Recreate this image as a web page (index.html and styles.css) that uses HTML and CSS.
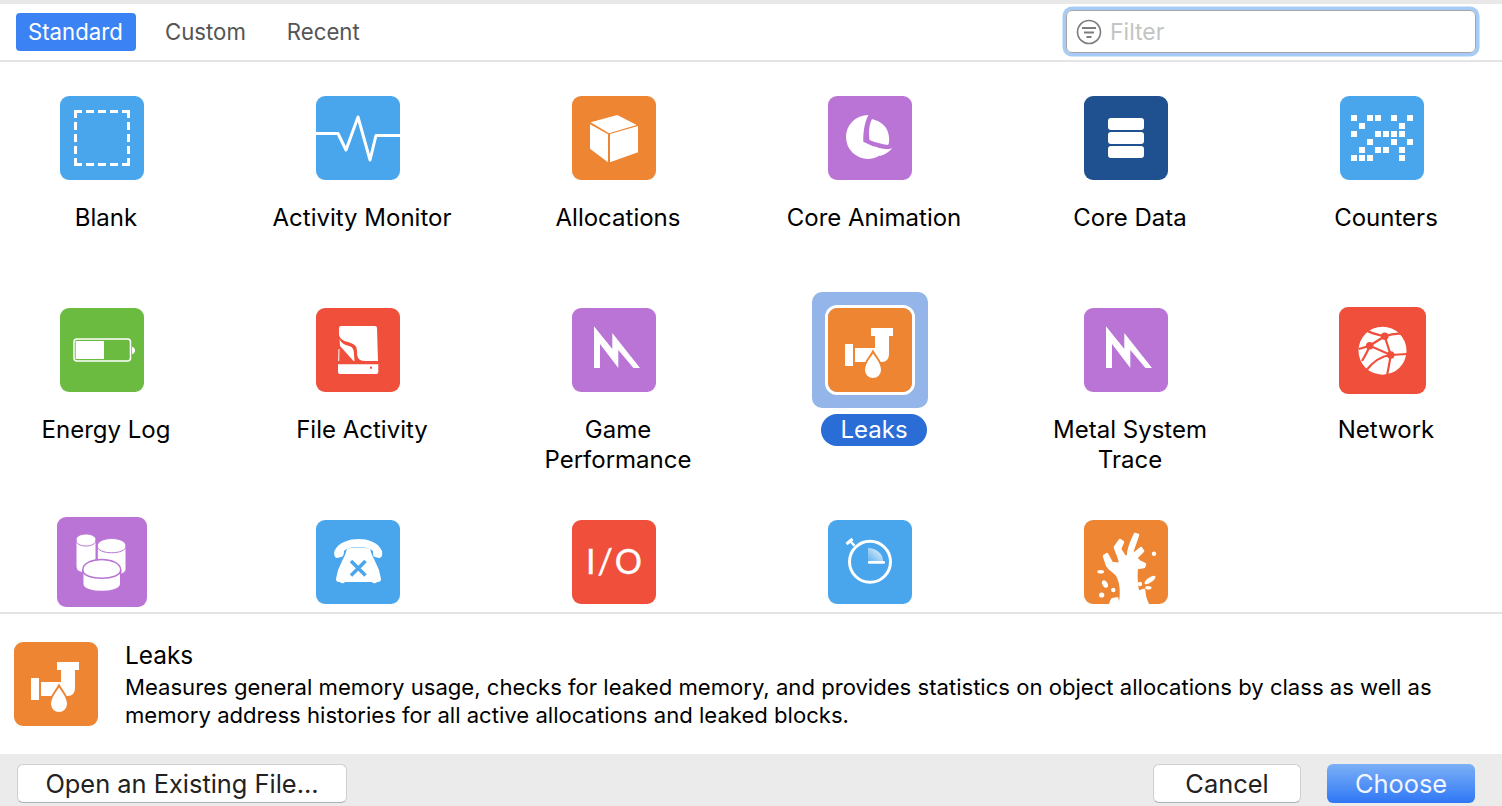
FILE: index.html
```html
<!DOCTYPE html>
<html lang="en">
<head>
  <meta charset="UTF-8">
  <title>Choose a profiling template</title>
  <link rel="stylesheet" href="styles.css">
</head>
<body>

<svg class="defs" aria-hidden="true">
  <symbol id="metal" viewBox="0 0 84 84">
    <path fill="#fff" d="M22 18.300V60h6V36l18.300 24V42l15.200 18H68L40.300 25v16z"/>
  </symbol>
  <symbol id="tap" viewBox="0 0 84 84">
    <path fill="#fff" d="M43 20h22v8H43zM17 36h8v22h-8zM27 40h20V28h14v18c0 5-3 8-7 8H27z"/>
    <path fill="#fff" stroke="#ee8533" stroke-width="2" d="M45 43.500c3 6 9 10.500 9 18.500a9 9 0 0 1-18 0c0-8 6-12.500 9-18.500z"/>
  </symbol>
</svg>

<div class="dialog">

  <div class="toolbar">
    <div class="tabs">
      <span class="tab tab-active">Standard</span>
      <span class="tab">Custom</span>
      <span class="tab">Recent</span>
    </div>
    <div class="filter">
      <svg class="filter-icon" viewBox="0 0 26 26">
        <circle cx="13" cy="13" r="11.500" fill="none" stroke="#7c7c7c" stroke-width="1.600"/>
        <path stroke="#7c7c7c" stroke-width="2" d="M6 9h14M8 13.500h10M10.500 18h5"/>
      </svg>
      <span class="filter-text">Filter</span>
    </div>
  </div>

  <div class="grid">

    <div class="tile">
      <div class="slot">
        <svg class="icon" viewBox="0 0 84 84">
          <rect width="84" height="84" rx="9" fill="#4aa6ec"/>
          <rect x="15.500" y="15.500" width="53" height="53" fill="none" stroke="#fff" stroke-width="3" stroke-dasharray="13 4 8 4 8 4 8 4" stroke-dashoffset="6.500"/>
        </svg>
      </div>
      <div class="label">Blank</div>
    </div>

    <div class="tile">
      <div class="slot">
        <svg class="icon" viewBox="0 0 84 84">
          <rect width="84" height="84" rx="9" fill="#4aa6ec"/>
          <path fill="none" stroke="#fff" stroke-width="3" stroke-linejoin="round" d="M0 37.500h22L30 54l12-33 12 43 6-24.500h24"/>
        </svg>
      </div>
      <div class="label">Activity Monitor</div>
    </div>

    <div class="tile">
      <div class="slot">
        <svg class="icon" viewBox="0 0 84 84">
          <rect width="84" height="84" rx="9" fill="#ee8533"/>
          <path fill="#fff" d="M18.700 26.300 45.300 19l19.400 10L37 37.300zM18 28.300l18 10v28L18 52.700zM38 38l28-8v26.300l-28 10z"/>
        </svg>
      </div>
      <div class="label">Allocations</div>
    </div>

    <div class="tile">
      <div class="slot">
        <svg class="icon" viewBox="0 0 84 84">
          <rect width="84" height="84" rx="9" fill="#b974d6"/>
          <circle cx="40" cy="41" r="22" fill="#fff"/>
          <path fill="#b974d6" d="M42 16c-5 8-7 19-6.700 29.700C44 50 54 55 64.500 52L68 52V16z"/>
          <path fill="#fff" d="M44 23c8 2 15 7 16.500 15 1 5 1 9-.5 11-6-1-13-2.500-18.500-5-1-8-.5-15 2.500-21z"/>
          <path fill="#fff" d="M46 50c6 3 12 4.300 18.300 2.300-3.300 3.700-7.300 6.200-12.300 7.700z"/>
        </svg>
      </div>
      <div class="label">Core Animation</div>
    </div>

    <div class="tile">
      <div class="slot">
        <svg class="icon" viewBox="0 0 84 84">
          <rect width="84" height="84" rx="9" fill="#1f5090"/>
          <rect x="24" y="22" width="36" height="12" rx="3" fill="#fff"/>
          <rect x="24" y="36" width="36" height="12" rx="3" fill="#fff"/>
          <rect x="24" y="50" width="36" height="12" rx="3" fill="#fff"/>
        </svg>
      </div>
      <div class="label">Core Data</div>
    </div>

    <div class="tile">
      <div class="slot">
        <svg class="icon" viewBox="0 0 84 84">
          <rect width="84" height="84" rx="9" fill="#4aa6ec"/>
          <path fill="#fff" d="M11 19h6v6h-6zM27 19h6v6h-6zM35 19h6v6h-6zM51 19h6v6h-6zM67 19h6v6h-6zM19 27h6v6h-6zM59 27h6v6h-6zM11 35h6v6h-6zM35 35h6v6h-6zM43 35h6v6h-6zM51 35h6v6h-6zM59 35h6v6h-6zM27 43h6v6h-6zM51 43h6v6h-6zM67 43h6v6h-6zM19 51h6v6h-6zM35 51h6v6h-6zM43 51h6v6h-6zM59 51h6v6h-6zM11 59h6v6h-6zM19 59h6v6h-6zM27 59h6v6h-6zM59 59h6v6h-6z"/>
        </svg>
      </div>
      <div class="label">Counters</div>
    </div>

    <div class="tile">
      <div class="slot">
        <svg class="icon" viewBox="0 0 84 84">
          <rect width="84" height="84" rx="9" fill="#6cbb41"/>
          <rect x="14" y="31" width="56.500" height="22" rx="3" fill="none" stroke="#fff" stroke-width="1.500"/>
          <rect x="15.700" y="33" width="28.300" height="18" fill="#fff"/>
          <path fill="#fff" d="M72 38.700c2 .5 3 2 3 3.700s-1 3.200-3 3.700z"/>
        </svg>
      </div>
      <div class="label">Energy Log</div>
    </div>

    <div class="tile">
      <div class="slot">
        <svg class="icon" viewBox="0 0 84 84">
          <rect width="84" height="84" rx="9" fill="#ef4f3b"/>
          <path fill="#fff" d="M23 20a2 2 0 0 1 2-2h34a2 2 0 0 1 2 2l1 33H49c-6 0-8-3-8-9 0-7-3-8-9-10-5-1-9-4-9-8z"/>
          <path fill="#fff" d="M23.500 31c2 5 6.500 6 9.500 7 4 1 5 4 5 8l.5 7h-1L24 38z"/>
          <path fill="#fff" d="M22.500 41h1l-.3 12h-1z"/>
          <path fill="#fff" d="M22 56.300h40.300V64a2 2 0 0 1-2 2H24a2 2 0 0 1-2-2z"/>
          <rect x="54" y="58.700" width="2" height="2" fill="#ef4f3b"/>
        </svg>
      </div>
      <div class="label">File Activity</div>
    </div>

    <div class="tile">
      <div class="slot">
        <svg class="icon" viewBox="0 0 84 84">
          <rect width="84" height="84" rx="9" fill="#b974d6"/>
          <use href="#metal"/>
        </svg>
      </div>
      <div class="label">Game Performance</div>
    </div>

    <div class="tile tile-selected">
      <div class="slot">
        <div class="selection">
          <div class="ring">
            <svg class="icon" viewBox="0 0 84 84">
              <rect width="84" height="84" rx="9" fill="#ee8533"/>
              <use href="#tap"/>
            </svg>
          </div>
        </div>
      </div>
      <div class="label">Leaks</div>
    </div>

    <div class="tile">
      <div class="slot">
        <svg class="icon" viewBox="0 0 84 84">
          <rect width="84" height="84" rx="9" fill="#b974d6"/>
          <use href="#metal"/>
        </svg>
      </div>
      <div class="label">Metal System Trace</div>
    </div>

    <div class="tile">
      <div class="slot">
        <svg class="icon icon-87" viewBox="0 0 87 87">
          <rect width="87" height="87" rx="9" fill="#ef4f3b"/>
          <circle cx="43.500" cy="43.700" r="24" fill="#fff"/>
          <g fill="none" stroke="#ef4f3b" stroke-width="2.200">
            <path d="M45.700 29.300 30.700 38.700l21 9.300-6-18.700"/>
            <path d="M45.700 29.300C40 28 33 27 27 23M45.700 29.300C52 27 58 26 65 27M30.700 38.700 20 42M30.700 38.700C29 44 26 49 23 54"/>
            <path d="M51.700 48 68 47M51.700 48c-1 6-2 13-3.500 19.300M51.700 48c-10 1-18 7-25 16"/>
          </g>
          <circle cx="45.700" cy="29.300" r="3.800" fill="#ef4f3b"/>
          <circle cx="30.700" cy="38.700" r="3.800" fill="#ef4f3b"/>
          <circle cx="51.700" cy="48" r="3.800" fill="#ef4f3b"/>
        </svg>
      </div>
      <div class="label">Network</div>
    </div>

    <div class="tile">
      <div class="slot">
        <svg class="icon icon-90" viewBox="0 0 90 90">
          <rect width="90" height="90" rx="9" fill="#b974d6"/>
          <g stroke="#b974d6" stroke-width="1">
            <path fill="#fff" d="M19 23c0-8 20-8 20 0v27c0 8-20 8-20 0z"/>
            <path fill="none" d="M19 23c0 8 20 8 20 0"/>
            <path fill="#fff" d="M40.300 29c0-10 28.700-10 28.700 0v23c0 9-28.700 9-28.700 0z"/>
            <path fill="none" d="M40.300 29c0 9 28.700 9 28.700 0"/>
          </g>
          <path fill="#fff" stroke="#b974d6" stroke-width="1.500" d="M25.700 53c0-14 38-14 38 0v14c0 10-38 10-38 0z"/>
          <path fill="none" stroke="#b974d6" stroke-width="1.500" d="M25.700 53c0 11 38 11 38 0"/>
        </svg>
      </div>
    </div>

    <div class="tile">
      <div class="slot">
        <svg class="icon" viewBox="0 0 84 84">
          <rect width="84" height="84" rx="9" fill="#4aa6ec"/>
          <path fill="#fff" d="M18.500 31C22 22 34 19 42.500 19 52 19 62 22 66 31c1 5-1 7-3 7l-4-1c-2 0-2-3-2-6-4-3-8-4-15-4-6 0-11 1-14 4 0 3-1 6-3 6l-4 1c-2 0-3.500-3-2.500-7z"/>
          <path fill="#fff" d="M31 28.500c7-1.500 16-1.500 23 0 1 4 2 7 4 10.500l5 11 2 9c0 2-1 3-3 3h-1a3 3 0 0 1-5 0H29a3 3 0 0 1-5 0h-1c-2 0-3-1-3-3l2-9 5-11c2-3.500 3-6.500 4-10.500z"/>
          <path stroke="#4aa6ec" stroke-width="3.500" d="m35 41 14.500 14.500M49.500 41 35 55.500"/>
        </svg>
      </div>
    </div>

    <div class="tile">
      <div class="slot">
        <svg class="icon" viewBox="0 0 84 84">
          <rect width="84" height="84" rx="9" fill="#ef4f3b"/>
          <text class="io-text" x="43" y="54" text-anchor="middle">I/O</text>
        </svg>
      </div>
    </div>

    <div class="tile">
      <div class="slot">
        <svg class="icon" viewBox="0 0 84 84">
          <defs>
            <linearGradient id="sweep" x1="1" y1="0" x2="0" y2="1">
              <stop offset="0" stop-color="#fff" stop-opacity=".9"/>
              <stop offset="1" stop-color="#fff" stop-opacity=".15"/>
            </linearGradient>
          </defs>
          <rect width="84" height="84" rx="9" fill="#4aa6ec"/>
          <circle cx="42" cy="41.700" r="20.500" fill="none" stroke="#fff" stroke-width="3"/>
          <path stroke="#fff" stroke-width="2.500" d="m23 22 3.500 3.700"/>
          <path stroke="#fff" stroke-width="3" d="m18.500 24 6-5"/>
          <path fill="url(#sweep)" d="M40 28c8.500 0 15 6 15 13H40z"/>
          <rect x="40" y="41" width="17" height="2.700" rx="1" fill="#fff"/>
        </svg>
      </div>
    </div>

    <div class="tile">
      <div class="slot">
        <svg class="icon" viewBox="0 0 84 84">
          <rect width="84" height="84" rx="9" fill="#ee8533"/>
          <path fill="#fff" stroke="#fff" stroke-width="2.500" stroke-linejoin="round" d="M36 84c2-12 1-22-3-29-5-5-9-7-10-10l-3-9 3-2 5 9 8 1c0-6-4-12-5-17l5-7 3 2-3 7 5 8 3-1c0-8 4-16 7-22l3 1c-2 7-5 13-6 18h3l6-5 2 3-7 7 3 3 6 3-1 3-7 1c-1 6-1 14 1 24l6-2 2 14z"/>
          <ellipse cx="16.700" cy="51.700" rx="3.400" ry="1.800" fill="#fff"/>
          <ellipse cx="21" cy="64" rx="2.600" ry="4" fill="#fff" transform="rotate(-30 21 64)"/>
          <circle cx="17.700" cy="75" r="2.600" fill="#fff"/>
          <circle cx="29.300" cy="70" r="2.200" fill="#fff"/>
          <path fill="#fff" d="M25 84c1-3 2-6 3-6l6-1 2 7z"/>
          <circle cx="70" cy="33.700" r="2.200" fill="#fff"/>
          <ellipse cx="66" cy="60" rx="6.500" ry="2.400" fill="#fff" transform="rotate(-35 66 60)"/>
          <ellipse cx="64.300" cy="67.700" rx="3.200" ry="1.800" fill="#fff"/>
          <circle cx="56" cy="64" r="2.200" fill="#fff"/>
          <path fill="#fff" d="M54 84c0-4 2-9 5-10l3 3 3 7z"/>
        </svg>
      </div>
    </div>

  </div>

  <div class="detail">
    <svg class="icon" viewBox="0 0 84 84">
      <rect width="84" height="84" rx="9" fill="#ee8533"/>
      <use href="#tap"/>
    </svg>
    <div class="detail-text">
      <div class="detail-title">Leaks</div>
      <p class="detail-desc">Measures general memory usage, checks for leaked memory, and provides statistics on object allocations by class as well as memory address histories for all active allocations and leaked blocks.</p>
    </div>
  </div>

  <div class="footer">
    <button class="btn btn-open">Open an Existing File...</button>
    <div class="footer-right">
      <button class="btn btn-cancel">Cancel</button>
      <button class="btn btn-choose">Choose</button>
    </div>
  </div>

</div>

</body>
</html>
```

FILE: styles.css
```css
html, body {
  margin: 0;
  padding: 0;
  height: 100%;
  overflow: hidden;
}
body {
  font-family: Inter, 'Liberation Sans', sans-serif;
  background-color: #fff;
  color: #000;
}
.defs {
  display: none;
}
.dialog {
  height: 100%;
  box-sizing: border-box;
  border-top: 4px solid #e8e8e8;
  display: flex;
  flex-direction: column;
}

/* top bar */
.toolbar {
  height: 58px;
  flex-shrink: 0;
  box-sizing: border-box;
  border-bottom: 2px solid #e4e4e4;
  display: flex;
  justify-content: space-between;
  align-items: center;
  padding: 0 26px 0 16px;
}
.tabs {
  display: flex;
  gap: 17px;
}
.tab {
  height: 38px;
  line-height: 38px;
  padding: 0 12px;
  font-size: 22.2px;
  color: #555;
  border-radius: 4px;
}
.tab-active {
  min-width: 96px;
  background-color: #3b82f4;
  color: #fff;
}
.filter {
  width: 410px;
  height: 43px;
  margin-bottom: 1px;
  box-sizing: border-box;
  border: 1.5px solid #a4a4a4;
  border-radius: 6px;
  box-shadow: 0 0 0 3.5px #a6cbf7;
  display: flex;
  align-items: center;
  gap: 8px;
  padding-left: 9px;
}
.filter-icon {
  width: 26px;
  height: 26px;
}
.filter-text {
  font-size: 23px;
  color: #c4c4c4;
}

/* template grid */
.grid {
  flex: 1;
  min-height: 0;
  overflow: hidden;
  display: grid;
  grid-template-columns: repeat(6, 256px);
  grid-auto-rows: 212px;
  margin-left: -22px;
  padding-top: 34px;
}
.tile {
  display: flex;
  flex-direction: column;
  align-items: center;
}
.slot {
  width: 84px;
  height: 84px;
  margin-left: -8px;
  flex-shrink: 0;
  display: flex;
  justify-content: center;
  align-items: center;
}
.icon {
  display: block;
  width: 84px;
  height: 84px;
  flex-shrink: 0;
}
.icon-87 {
  width: 87px;
  height: 87px;
}
.icon-90 {
  width: 90px;
  height: 90px;
}
.io-text {
  font-family: Lato, sans-serif;
  font-size: 34px;
  letter-spacing: 2px;
  fill: #fff;
  stroke: #fff;
  stroke-width: 0.35px;
}
.label {
  margin-top: 23px;
  width: 210px;
  text-align: center;
  font-size: 24px;
  line-height: 30px;
}
.selection {
  width: 116px;
  height: 116px;
  flex-shrink: 0;
  background-color: #93b5e9;
  border-radius: 10px;
  display: flex;
  justify-content: center;
  align-items: center;
}
.ring {
  border: 3px solid #fff;
  border-radius: 12px;
}
.tile-selected .label {
  width: auto;
  margin-top: 22px;
  padding: 1px 19px;
  background-color: #2a6dd6;
  color: #fff;
  border-radius: 16px;
}

/* description of the selected template */
.detail {
  height: 142px;
  flex-shrink: 0;
  box-sizing: border-box;
  border-top: 2px solid #e4e4e4;
  padding: 28px 0 0 14px;
  display: flex;
  gap: 27px;
}
.detail-text {
  margin-top: -1px;
  flex: 1;
}
.detail-title {
  font-size: 24.4px;
  line-height: 28px;
}
.detail-desc {
  margin: 4px 0 0;
  width: 1340px;
  font-size: 22.1px;
  line-height: 28px;
}

/* bottom buttons */
.footer {
  height: 52px;
  flex-shrink: 0;
  box-sizing: border-box;
  background-color: #ebebeb;
  padding: 10px 27px 3px 17px;
  display: flex;
  justify-content: space-between;
}
.footer-right {
  display: flex;
  gap: 26px;
}
.btn {
  height: 39px;
  padding: 0;
  font-family: inherit;
  font-size: 25.4px;
  color: #222;
  background-color: #fff;
  border: 1px solid #cfcfcf;
  border-bottom-color: #b0b0b0;
  border-radius: 6px;
}
.btn-open {
  width: 330px;
}
.btn-cancel {
  width: 148px;
}
.btn-choose {
  width: 148px;
  color: #f2f6ff;
  border: none;
  background: linear-gradient(#7cb0f6, #2f77f5);
}
```
